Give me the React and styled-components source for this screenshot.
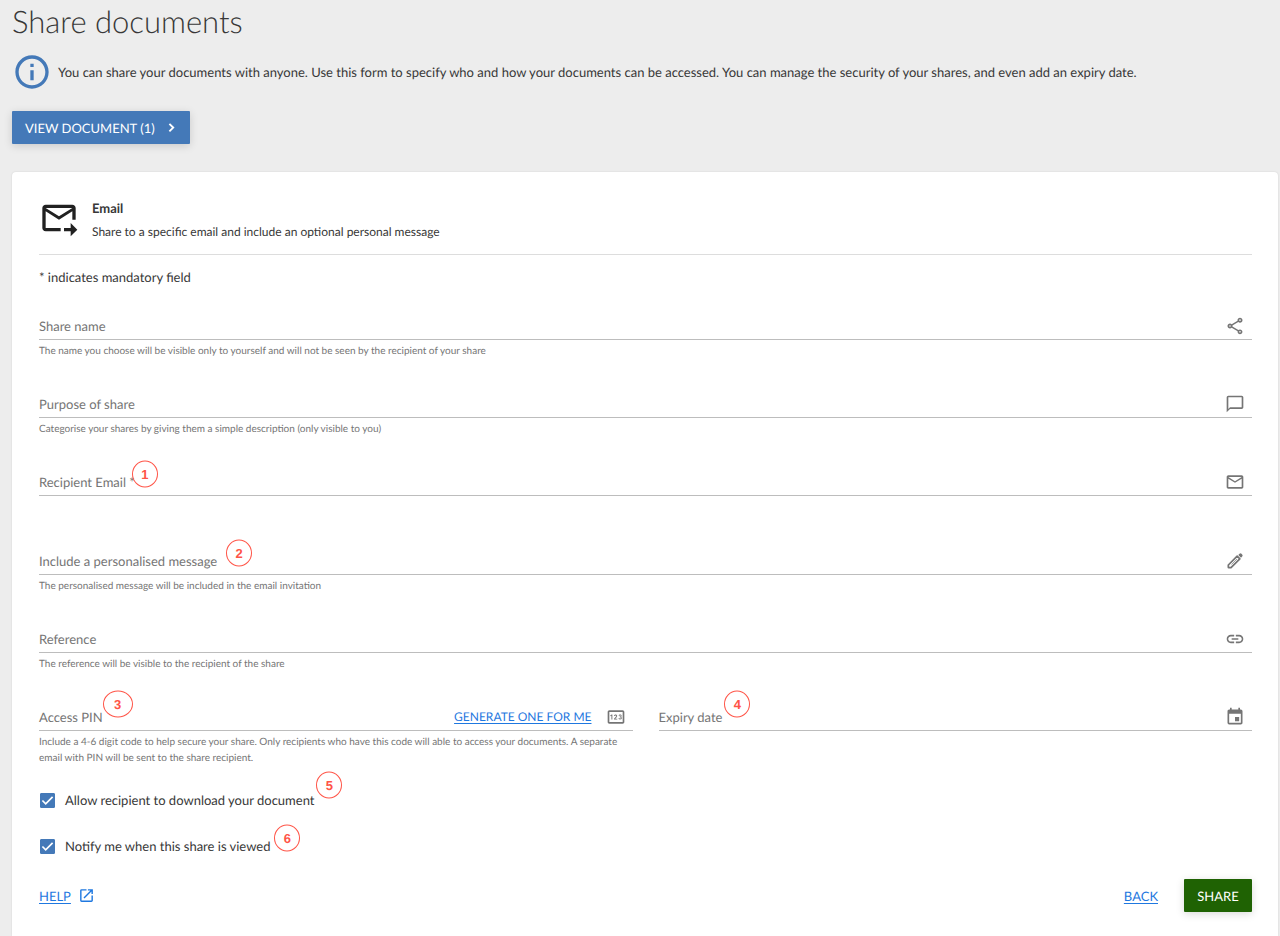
import React, { useState } from "react";
import styled, { createGlobalStyle } from "styled-components";
import {
  MdInfoOutline,
  MdOutlineForwardToInbox,
  MdOutlineShare,
  MdChatBubbleOutline,
  MdMailOutline,
  MdLink,
  MdOutlinePin,
  MdEvent,
  MdOpenInNew,
} from "react-icons/md";

const GlobalStyle = createGlobalStyle`
  * { box-sizing: border-box; }
  body {
    margin: 0;
    background: #ededed;
    color: #383838;
    font-family: Lato, "Liberation Sans", sans-serif;
    font-size: 13px;
    line-height: 16px;
    text-rendering: geometricPrecision;
  }
  button, input { font: inherit; color: inherit; text-rendering: inherit; }
  svg { display: block; flex: none; }
`;

const Page = styled.div`
  display: flex;
  flex-direction: column;
  min-height: 100vh;
  padding: 0 2px 0 12px;
`;

const Title = styled.h1`
  margin: 1px 0 0;
  font-size: 31px;
  line-height: 40px;
  font-weight: 300;
`;

const Info = styled.div`
  display: flex;
  align-items: center;
  gap: 6px;
  margin-top: 11px;
  height: 40px;

  svg { color: #4479b8; }
  p { margin: 0; }
`;

const SolidButton = styled.button`
  display: inline-flex;
  align-items: center;
  justify-content: center;
  gap: 8px;
  height: 33px;
  min-width: 68px;
  padding: 0 13px;
  border: 0;
  border-radius: 1px;
  background: ${({ $tone }) => $tone};
  color: #fff;
  cursor: pointer;
  box-shadow: 0 2px 8px rgba(0, 0, 0, 0.15);
`;

const Toolbar = styled.div`
  display: flex;
  margin: 19px 0 28px;

  ${SolidButton} { padding-right: 10px; }
`;

const Card = styled.form`
  flex: 1;
  padding: 26px 26px 24px 27px;
  background: #fff;
  border-radius: 4px 4px 0 0;
  box-shadow: 0 0 2px rgba(0, 0, 0, 0.12);
`;

const CardHeader = styled.header`
  display: flex;
  gap: 13px;
  height: 57px;
  border-bottom: 1px solid #ddd;

  svg { color: #212121; }
`;

const Heading = styled.h2`
  margin: 2px 0 8px;
  font-size: 13px;
  line-height: 16px;
  font-weight: 700;
`;

const Summary = styled.p`
  margin: 0;
  font-size: 12px;
`;

const Note = styled.p`
  margin: 14px 0 27px;
`;

const Fields = styled.div`
  display: flex;
  flex-direction: column;
  gap: 31px;
`;

const Columns = styled.div`
  display: grid;
  grid-template-columns: 1fr 1fr;
  gap: 26px;
`;

const FieldRow = styled.div`
  display: flex;
  align-items: center;
  height: 28px;
  padding-right: 7px;
  border-bottom: 1px solid #bdbdbd;
  color: #757575;

  svg { margin-left: 14px; }
`;

const Label = styled.label`
  position: relative;
  white-space: nowrap;
`;

const TextInput = styled.input`
  flex: 1;
  min-width: 0;
  height: 24px;
  padding: 0 8px;
  border: 0;
  outline: 0;
  background: transparent;
`;

const Hint = styled.p`
  margin: 3px 0 0;
  font-size: 10px;
  line-height: 16px;
  color: #757575;

  &:empty { height: 17px; }
`;

const LinkButton = styled.button`
  padding: 0;
  border: 0;
  background: none;
  color: #1f78e0;
  font-size: ${({ $small }) => ($small ? 12 : 13)}px;
  text-decoration: underline;
  text-underline-offset: 2px;
  cursor: pointer;
`;

const Badge = styled.span`
  position: absolute;
  left: calc(100% + ${({ $dx }) => $dx}px);
  top: calc(50% - ${({ $rise }) => $rise}px);
  display: flex;
  align-items: center;
  justify-content: center;
  width: ${({ $wide }) => ($wide ? 30 : 26)}px;
  height: 27px;
  transform: translate(-50%, -50%);
  border: 1px solid #ff5447;
  border-radius: 50%;
  color: #ff5447;
  font: 700 13px "Liberation Sans", sans-serif;
`;

const Options = styled.div`
  display: flex;
  flex-direction: column;
  gap: 30px;
  margin-top: 26px;
`;

const Option = styled.div`
  display: flex;
  align-items: center;
  gap: 10px;
`;

const Tick = styled.span`
  display: grid;
  place-items: center;
  width: 16px;
  height: 16px;

  > * { grid-area: 1 / 1; }

  svg { color: #fff; pointer-events: none; }
`;

const TickInput = styled.input`
  appearance: none;
  width: 15px;
  height: 15px;
  margin: 0;
  border: 1px solid #4479b8;
  border-radius: 1px;

  &:checked { background: #4479b8; }
`;

const Footer = styled.footer`
  display: flex;
  align-items: center;
  gap: 26px;
  margin-top: 25px;
`;

const HelpLink = styled.a`
  display: flex;
  align-items: center;
  gap: 7px;
  margin-right: auto;
  color: #1f78e0;
  text-underline-offset: 2px;
`;

function ChevronIcon({ size }) {
  return (
    <svg width={size} height={size} viewBox="0 0 17 17" fill="none" stroke="currentColor" strokeWidth="1.9">
      <path d="M6.4 4.8 L10.2 8.6 L6.4 12.4" />
    </svg>
  );
}

function CheckIcon({ size }) {
  return (
    <svg width={size} height={size} viewBox="0 0 15 15" fill="none" stroke="currentColor" strokeWidth="1.7">
      <path d="M2.4 7.5 L5.7 10.8 L12.6 3.9" />
    </svg>
  );
}

function PencilIcon({ size }) {
  return (
    <svg width={size} height={size} viewBox="0 0 24 24">
      <path
        d="M4 16.8 L14.6 6.2 L17.8 9.4 L7.2 20 H4.6 Q4 20 4 19.4 Z"
        fill="none"
        stroke="currentColor"
        strokeWidth="2.1"
        strokeLinejoin="round"
      />
      <path
        d="M16 4.8 L17.4 3.4 Q18.6 2.2 19.8 3.4 L20.6 4.2 Q21.8 5.4 20.6 6.6 L19.2 8 Z"
        fill="currentColor"
      />
      <path d="M7.8 16.2 L14.4 9.6" stroke="currentColor" strokeWidth="0.8" />
    </svg>
  );
}

function Field({ id, label, hint, icon: Icon, badge, action, type = "text" }) {
  return (
    <div>
      <FieldRow>
        <Label htmlFor={id}>
          {label}
          {badge}
        </Label>
        <TextInput id={id} type={type} />
        {action}
        <Icon size={20} />
      </FieldRow>
      <Hint>{hint}</Hint>
    </div>
  );
}

function CheckOption({ id, label, badge }) {
  const [checked, setChecked] = useState(true);
  return (
    <Option>
      <Tick>
        <TickInput id={id} type="checkbox" checked={checked} onChange={(e) => setChecked(e.target.checked)} />
        {checked && <CheckIcon size={15} />}
      </Tick>
      <Label htmlFor={id}>
        {label}
        {badge}
      </Label>
    </Option>
  );
}

export default function App() {
  return (
    <>
      <GlobalStyle />
      <Page>
        <Title>Share documents</Title>
        <Info>
          <MdInfoOutline size={40} />
          <p>
            You can share your documents with anyone. Use this form to specify who and how your documents can be
            accessed. You can manage the security of your shares, and even add an expiry date.
          </p>
        </Info>
        <Toolbar>
          <SolidButton type="button" $tone="#4479b8">
            VIEW DOCUMENT (1)
            <ChevronIcon size={17} />
          </SolidButton>
        </Toolbar>
        <Card onSubmit={(e) => e.preventDefault()}>
          <CardHeader>
            <MdOutlineForwardToInbox size={40} />
            <div>
              <Heading>Email</Heading>
              <Summary>Share to a specific email and include an optional personal message</Summary>
            </div>
          </CardHeader>
          <Note>* indicates mandatory field</Note>
          <Fields>
            <Field
              id="name"
              label="Share name"
              icon={MdOutlineShare}
              hint="The name you choose will be visible only to yourself and will not be seen by the recipient of your share"
            />
            <Field
              id="purpose"
              label="Purpose of share"
              icon={MdChatBubbleOutline}
              hint="Categorise your shares by giving them a simple description (only visible to you)"
            />
            <Field
              id="email"
              type="email"
              label="Recipient Email *"
              icon={MdMailOutline}
              badge={<Badge $dx={10} $rise={8}>1</Badge>}
            />
            <Field
              id="message"
              label="Include a personalised message"
              icon={PencilIcon}
              badge={<Badge $dx={22} $rise={8}>2</Badge>}
              hint="The personalised message will be included in the email invitation"
            />
            <Field
              id="reference"
              label="Reference"
              icon={MdLink}
              hint="The reference will be visible to the recipient of the share"
            />
            <Columns>
              <Field
                id="pin"
                label="Access PIN"
                icon={MdOutlinePin}
                badge={<Badge $wide $dx={15} $rise={13}>3</Badge>}
                action={<LinkButton type="button" $small>GENERATE ONE FOR ME</LinkButton>}
                hint="Include a 4-6 digit code to help secure your share. Only recipients who have this code will able to access your documents. A separate email with PIN will be sent to the share recipient."
              />
              <Field
                id="expiry"
                label="Expiry date"
                icon={MdEvent}
                badge={<Badge $dx={15} $rise={13}>4</Badge>}
              />
            </Columns>
          </Fields>
          <Options>
            <CheckOption
              id="download"
              label="Allow recipient to download your document"
              badge={<Badge $dx={15} $rise={15}>5</Badge>}
            />
            <CheckOption
              id="notify"
              label="Notify me when this share is viewed"
              badge={<Badge $dx={17} $rise={8}>6</Badge>}
            />
          </Options>
          <Footer>
            <HelpLink href="#help">
              HELP
              <MdOpenInNew size={17} />
            </HelpLink>
            <LinkButton type="button">BACK</LinkButton>
            <SolidButton type="submit" $tone="#1f6203">SHARE</SolidButton>
          </Footer>
        </Card>
      </Page>
    </>
  );
}
